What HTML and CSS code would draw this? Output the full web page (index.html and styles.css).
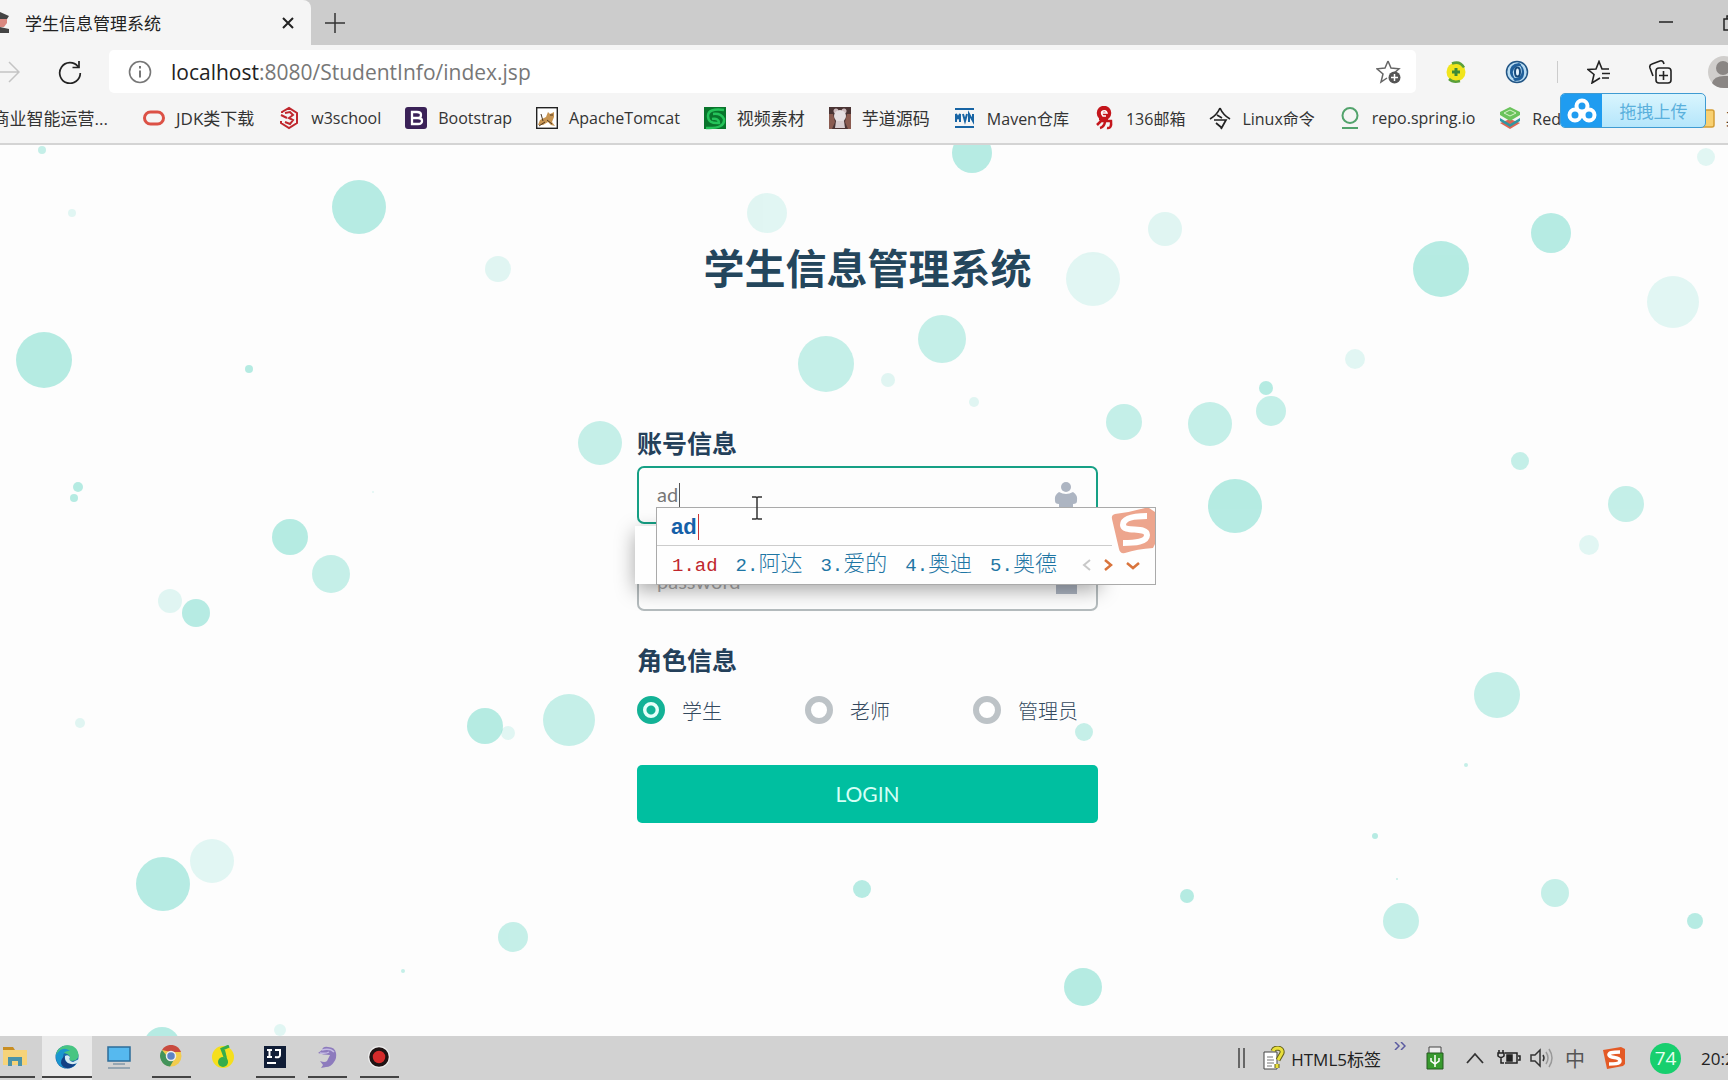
FILE: index.html
```html
<!DOCTYPE html>
<html lang="zh-CN">
<head>
  <meta charset="UTF-8" />
  <title>学生信息管理系统</title>
  <link rel="stylesheet" href="styles.css">
</head>
<body>
  <header class="browser">
    <div class="tabs">
      <div class="tab">
        <svg class="favicon" width="10" height="22" viewBox="0 0 10 22"><path d="M0 0l9 4-2 3H0z" fill="#444"/><path d="M0 7h7v4l-3 4H0z" fill="#d98880"/><path d="M0 15l9 2v4H0z" fill="#444"/></svg>
        <span class="tab-title">学生信息管理系统</span>
        <button class="icon-btn" aria-label="关闭"><svg width="14" height="14" viewBox="0 0 14 14" fill="none" stroke="#222" stroke-width="2"><path d="M2 2l10 10M12 2L2 12"/></svg></button>
      </div>
      <button class="icon-btn new-tab" aria-label="新标签"><svg width="20" height="20" viewBox="0 0 20 20" fill="none" stroke="#333" stroke-width="1.5"><path d="M10 0v20M0 10h20"/></svg></button>
      <div class="window-btns">
        <svg width="14" height="14" viewBox="0 0 14 14"><path d="M0 6h14" stroke="#222" stroke-width="1.5"/></svg>
        <svg width="5" height="16" viewBox="0 0 5 16" fill="none" stroke="#222" stroke-width="1.5"><path d="M6 4H1v11h5M4 4V1h2"/></svg>
      </div>
    </div>

    <div class="toolbar">
      <button class="icon-btn" aria-label="前进"><svg width="20" height="22" viewBox="0 0 20 22" fill="none" stroke="#c4c4c4" stroke-width="1.5"><path d="M0 11h18M9 1l10 10L9 21"/></svg></button>
      <button class="icon-btn reload" aria-label="刷新"><svg width="24" height="24" viewBox="0 0 24 24" fill="none" stroke="#222" stroke-width="1.7"><path d="M20 6.500A10.300 10.300 0 1 0 22.300 13M21 1v6.500h-6.500"/></svg></button>
      <div class="address">
        <svg width="24" height="24" viewBox="0 0 24 24" fill="none" stroke="#777" stroke-width="1.6"><circle cx="12" cy="12" r="10.500"/><path d="M12 10.500v7M12 6v2.500" stroke-width="2"/></svg>
        <div class="url"><b>localhost</b>:8080/StudentInfo/index.jsp</div>
        <svg width="26" height="26" viewBox="0 0 26 26"><path d="M12 2l3 7 8 .8-6 5.200M12 2L9 9l-8 .8 6 5.200-2 8 6-4" fill="none" stroke="#666" stroke-width="1.500"/><circle cx="18.500" cy="18.500" r="6" fill="#555"/><path d="M18.500 15v7M15 18.500h7" stroke="#fff" stroke-width="1.500"/></svg>
      </div>
      <button class="tool"><svg width="22" height="22" viewBox="0 0 22 22"><circle cx="11" cy="11" r="9.500" fill="#f1e51c"/><path d="M7 2.500q8-3 12 4M15 20q-7 2-11-2" fill="none" stroke="#5aa03a" stroke-width="2.500"/><path d="M11 7v8M7 11h8" stroke="#3d8a37" stroke-width="3"/></svg></button>
      <button class="tool"><svg width="24" height="24" viewBox="0 0 24 24"><circle cx="12" cy="12" r="10.500" fill="#b9dcf2" stroke="#215585" stroke-width="1.500"/><path d="M14 3Q4 4 5 13q1 5 5 6-5-8 1-12 3-2 5 0 1-3-2-4zM10 21q10 0 9-10-1-5-4-6 4 8-1 12-3 2-6 0 0 3 2 4z" fill="#1f5f9b"/><ellipse cx="12.500" cy="12" rx="2.500" ry="4.500" fill="#e8f5ff" stroke="#174a7b" stroke-width="2"/></svg></button>
      <span class="divider"></span>
      <button class="tool"><svg width="24" height="24" viewBox="0 0 24 24" fill="none" stroke="#222" stroke-width="1.600"><path d="M22 9h-7l-3-7.500L9 9l-8 .500 6 5L5 23l8-5M15 13.500h8M15 18h7"/></svg></button>
      <button class="tool"><svg width="24" height="24" viewBox="0 0 24 24" fill="none" stroke="#222" stroke-width="1.600"><path d="M5 16L2 8q-1-3 2-4l8-3q3-1 4 3"/><rect x="8" y="8" width="15" height="15" rx="3"/><path d="M15.500 11v9M11 15.500h9"/></svg></button>
      <svg class="avatar" width="20" height="32" viewBox="0 0 20 32"><circle cx="16" cy="16" r="16" fill="#d0cecc"/><circle cx="15" cy="12" r="7" fill="#8a8684"/><path d="M4 27q2-7 12-7h4v12h-4q-8 0-12-5z" fill="#8a8684"/></svg>
    </div>

    <nav class="bookmarks">
      <a href="#" class="cut zh">商业智能运营...</a>
      <a href="#"><svg width="22" height="24" viewBox="0 0 22 24"><rect x="1.500" y="6" width="19" height="12" rx="6" fill="none" stroke="#dc5146" stroke-width="3"/></svg><span class="zh">JDK类下载</span></a>
      <a href="#"><svg width="22" height="24" viewBox="0 0 22 24" fill="none" stroke="#c0272d" stroke-width="2"><path d="M4 7V6l7-4 8 5v10l-8 5-8-5v-2M3 9l6 3M7 7l5-1 3 3-4 3 4 2-3 4-5-2"/></svg>w3school</a>
      <a href="#"><svg width="22" height="24" viewBox="0 0 22 24"><rect y="1" width="22" height="22" rx="3" fill="#3a2157"/><path d="M7 6h5q4 0 4 3t-3 3q4 0 4 3t-4 3H7zM7 12h6" fill="none" stroke="#fff" stroke-width="2.300"/></svg>Bootstrap</a>
      <a href="#"><svg width="22" height="24" viewBox="0 0 22 24"><rect x=".700" y="1.700" width="20.600" height="20.600" fill="#fff" stroke="#222" stroke-width="1.400"/><path d="M2 19l2-5 6-3 2-5 2 2 4-2v5l-2 5 3 4-4-1-3-3-5 3z" fill="#c89552"/><path d="M3 20l6-4M11 14l5 4M14 9h3M5 8l2 7" stroke="#4c3823"/></svg>ApacheTomcat</a>
      <a href="#" class="zh"><svg width="22" height="24" viewBox="0 0 22 24"><rect y="1" width="22" height="22" fill="#09752c"/><path d="M20 4Q4 2 4 10t11 7q0-5-7-4M2 22q19 1 18-9-3-6-11-5" fill="none" stroke="#25c35a" stroke-width="2.500"/></svg>视频素材</a>
      <a href="#" class="zh"><svg width="22" height="24" viewBox="0 0 22 24"><rect y="1" width="22" height="22" fill="#4b3434"/><path d="M0 8h4l2 8-3 7H0zM22 8h-4l-2 8 3 7h3z" fill="#8a5b50"/><circle cx="7" cy="5" r="2.500" fill="#cbb9bb"/><circle cx="15" cy="5" r="2.500" fill="#cbb9bb"/><circle cx="11" cy="10" r="6" fill="#e5dfe1"/><path d="M7 15h8l1 7H6z" fill="#d8cdd0"/></svg>芋道源码</a>
      <a href="#"><svg width="22" height="24" viewBox="0 0 22 24" fill="none" stroke="#1764a4" stroke-width="2"><path d="M1 3h19M1 21h19"/><path d="M2 16V8l2 4 2-4v8M9 8l2 7 2-7M15 16V8l4 7V8"/></svg>Maven仓库</a>
      <a href="#"><svg width="22" height="24" viewBox="0 0 22 24" fill="none" stroke="#c4161c" stroke-width="2.500"><circle cx="11" cy="7" r="6" fill="#c4161c"/><path d="M8 7h6q-1-3-4-2t0 5h3" stroke="#fff" stroke-width="1.500"/><path d="M6 13h9M4 19l4-4h10q1 8-4 7M12 16q-1 5-5 6"/></svg>136邮箱</a>
      <a href="#"><svg width="22" height="24" viewBox="0 0 22 24" fill="none" stroke="#222" stroke-width="1.700"><path d="M11 2Q8 9 1 13M11 2q3 7 10 11M8 9l5 3M5 14h12l-5 9M7 17l6 5"/></svg>Linux命令</a>
      <a href="#"><svg width="22" height="24" viewBox="0 0 22 24" fill="none" stroke="#52a36c" stroke-width="2"><circle cx="11" cy="9.500" r="7.500"/><path d="M3 22h16"/></svg>repo.spring.io</a>
      <a href="#"><svg width="22" height="24" viewBox="0 0 22 24"><path d="M1 17l10 6 10-6-10-4z" fill="#df6553"/><path d="M1 12l10 6 10-6v3l-10 6-10-6z" fill="#3196a2"/><path d="M1 6l10-5 10 5v3l-10 6L1 9z" fill="#6ac35c"/><path d="M5 7l6-3 6 3-6 3z" fill="none" stroke="#d8f1c8"/></svg>Redis命令参考手册</a>
      <a href="#" class="zh"><svg width="22" height="24" viewBox="0 0 22 24"><rect x="1" y="4" width="20" height="17" rx="2" fill="#f8d071" stroke="#d39d35" stroke-width="1.500"/></svg>其他</a>
    </nav>
    <button class="upload">
      <span class="upload-logo"><svg width="30" height="26" viewBox="0 0 30 26" fill="none" stroke="#fff" stroke-width="4"><circle cx="15" cy="8" r="5.500"/><circle cx="8" cy="17" r="5.500"/><circle cx="22" cy="17" r="5.500"/></svg></span>
      <span class="upload-text">拖拽上传</span>
    </button>
  </header>

  <main class="page">
    <svg class="bubbles" viewBox="0 0 1728 892" preserveAspectRatio="xMidYMin slice" fill="#00bfa0">
      <g opacity=".28">
        <circle cx="359" cy="62" r="27"/><circle cx="972" cy="8" r="20"/><circle cx="1551" cy="88" r="20"/><circle cx="1441" cy="124" r="28"/><circle cx="44" cy="215" r="28"/><circle cx="249" cy="224" r="4"/><circle cx="1266" cy="243" r="7"/><circle cx="1235" cy="361" r="27"/><circle cx="78" cy="342" r="5"/><circle cx="74" cy="353" r="4"/><circle cx="290" cy="392" r="18"/><circle cx="196" cy="468" r="14"/><circle cx="485" cy="581" r="18"/><circle cx="163" cy="739" r="27"/><circle cx="862" cy="744" r="9"/><circle cx="1187" cy="751" r="7"/><circle cx="1083" cy="842" r="19"/><circle cx="1695" cy="776" r="8"/><circle cx="162" cy="900" r="18"/><circle cx="1375" cy="691" r="3"/>
      </g>
      <g opacity=".22">
        <circle cx="42" cy="5" r="4"/><circle cx="826" cy="219" r="28"/><circle cx="942" cy="194" r="24"/><circle cx="1271" cy="266" r="15"/><circle cx="1124" cy="277" r="18"/><circle cx="1210" cy="279" r="22"/><circle cx="600" cy="298" r="22"/><circle cx="1520" cy="316" r="9"/><circle cx="1626" cy="359" r="18"/><circle cx="331" cy="429" r="19"/><circle cx="569" cy="575" r="26"/><circle cx="1084" cy="587" r="9"/><circle cx="1497" cy="550" r="23"/><circle cx="1466" cy="620" r="2"/><circle cx="513" cy="792" r="15"/><circle cx="403" cy="826" r="2"/><circle cx="1401" cy="776" r="18"/><circle cx="1555" cy="748" r="14"/><circle cx="1397" cy="734" r="1"/>
      </g>
      <g opacity=".11">
        <circle cx="72" cy="68" r="4"/><circle cx="498" cy="124" r="13"/><circle cx="767" cy="68" r="20"/><circle cx="1165" cy="84" r="17"/><circle cx="1093" cy="134" r="27"/><circle cx="1706" cy="12" r="9"/><circle cx="1673" cy="157" r="26"/><circle cx="888" cy="235" r="7"/><circle cx="974" cy="257" r="5"/><circle cx="1355" cy="214" r="10"/><circle cx="1589" cy="400" r="10"/><circle cx="170" cy="456" r="12"/><circle cx="80" cy="578" r="5"/><circle cx="508" cy="588" r="7"/><circle cx="212" cy="716" r="22"/><circle cx="280" cy="885" r="6"/><circle cx="373" cy="347" r="1"/>
      </g>
    </svg>

    <form class="login">
      <h1>学生信息管理系统</h1>
      <label class="caption" for="user">账号信息</label>
      <div class="field active">
        <input type="text" id="user" value="ad" autocomplete="off">
        <span class="caret"></span>
        <svg class="field-icon" width="24" height="28" viewBox="0 0 24 28" fill="#adb5c2"><circle cx="12" cy="6" r="5"/><path d="M5 11q7 4 14 0 5 3 4 9 0 3-4 3v3q-7 2-14 0v-3q-4 0-4-3-1-6 4-9z"/></svg>
        <div class="suggest"></div>
        <div class="ime">
          <div class="ime-input">ad<span class="ime-caret"></span></div>
          <div class="ime-list">
            <span class="first">1.ad</span>
            <span>2.<i>阿达</i></span>
            <span>3.<i>爱的</i></span>
            <span>4.<i>奥迪</i></span>
            <span>5.<i>奥德</i></span>
            <svg class="ime-arrows" width="60" height="16" viewBox="0 0 60 16" fill="none" stroke="#d9743c" stroke-width="2.500"><path d="M9 3L3 8l6 5" stroke="#c8c8c8" stroke-width="2"/><path d="M24 3l6 5-6 5M46 6l6 5 6-5"/></svg>
          </div>
          <svg class="ime-logo" width="44" height="46" viewBox="0 0 44 46"><path d="M4 6Q20 4 34 0h4l6 4v32l-2 4Q26 41 14 45q-5 1-6-4L1 11q-1-4 3-5z" fill="#eda58d"/><path d="M36 8Q12 8 12 17c0 8 24 1 24 10 0 7-12 8-24 8" fill="none" stroke="#fff" stroke-width="6"/></svg>
        </div>
        <svg class="pointer" width="10" height="24" viewBox="0 0 10 24" fill="none" stroke="#333" stroke-width="1.500"><path d="M0 1h4l1 1 1-1h4M5 2v20M0 23h4l1-1 1 1h4"/></svg>
      </div>
      <div class="field">
        <input type="password" id="pwd" placeholder="password" aria-label="password">
        <svg class="field-icon" width="24" height="28" viewBox="0 0 24 28" fill="#adb5c2"><path d="M2 12h21v14H2z"/><path d="M7 12V7q5-9 10 0v5" fill="none" stroke="#adb5c2" stroke-width="3"/></svg>
      </div>

      <div class="caption roles-caption">角色信息</div>
      <div class="roles">
        <label><input type="radio" name="role" checked>学生</label>
        <label><input type="radio" name="role">老师</label>
        <label><input type="radio" name="role">管理员</label>
      </div>
      <button type="button" class="submit">LOGIN</button>
    </form>
  </main>

  <footer class="taskbar">
    <div class="apps">
      <button class="app running"><svg width="24" height="24" viewBox="0 0 24 24"><path d="M0 2h10l2 3H0z" fill="#c98e22"/><path d="M0 5h24v15H0z" fill="#f6d37a"/><path d="M5 21v-9h14v9h-4v-5H9v5z" fill="#4b93a8"/></svg></button>
      <button class="app current"><svg width="24" height="24" viewBox="0 0 24 24"><circle cx="12" cy="12" r="11.500" fill="#1868ad"/><path d="M1 10C3-3 23-3 23.500 10c0 6-7 7-9 5 3-6-6-9-13-5z" fill="#47c582"/><path d="M1 10Q7 0 15 6q-7-1-7 6c0 8 8 10 14 6-5 8-22 7-21-8z" fill="#1996cf"/><path d="M10 11c-2 7 5 9 12 6-5 9-15 7-16 1 0-4 2-6 4-7z" fill="#123f84"/><path d="M10 11q3-2 5 1-2 4 3 5l6-3-1 4c-7 3-14 0-13-7z" fill="#d4eaf2"/></svg></button>
      <button class="app"><svg width="24" height="24" viewBox="0 0 24 24"><rect x="1" y="2" width="22" height="14" fill="#56b9ef" stroke="#2d6c99" stroke-width="1.500"/><path d="M6 19h12M1 23h22" stroke="#8298a8" stroke-width="1.500"/></svg></button>
      <button class="app running"><svg width="22" height="22" viewBox="0 0 22 22"><circle cx="11" cy="11" r="10.500" fill="#f2cc4e"/><path d="M2 5a10.500 10.500 0 0 1 18 0l1 2H11z" fill="#c94b3f"/><path d="M2 5a10.500 10.500 0 0 0 8 16.500l4-7-6-2z" fill="#43935a"/><circle cx="11" cy="11" r="4.500" fill="#5c83c6" stroke="#eee" stroke-width="1.500"/></svg></button>
      <button class="app"><svg width="24" height="24" viewBox="0 0 24 24"><circle cx="12" cy="12" r="11" fill="#f5df1d"/><path d="M18 1l-7 3 3 8" fill="none" stroke="#35ad4c" stroke-width="3"/><path d="M13 5l3 13" stroke="#35ad4c" stroke-width="2"/><circle cx="12" cy="17" r="5" fill="#35ad4c"/></svg></button>
      <button class="app running"><svg width="24" height="24" viewBox="0 0 24 24"><path d="M1 1h22v22H1z" fill="#101d36"/><path d="M4 5h5M6.500 5v7M4 12h5M12 5h5v5q0 3-5 2M4 18h9" fill="none" stroke="#fff" stroke-width="2"/></svg></button>
      <button class="app running"><svg width="24" height="24" viewBox="0 0 24 24"><path d="M3 8l4-3q1-4 6-3 7 0 8 6 1 5-2 9-3 5-8 5l-5 1 2-3-3-4q5 2 7 0l3-6Q8 10 3 8z" fill="#8d7bbd"/><path d="M7 5q8-2 12 2M5 8q6 1 9-1" fill="none" stroke="#c5bce4" stroke-width="1.500"/></svg></button>
      <button class="app running"><svg width="24" height="24" viewBox="0 0 24 24"><circle cx="12" cy="12" r="11" fill="#eee"/><circle cx="12" cy="12" r="8" fill="#d52b2b" stroke="#201414" stroke-width="3.500"/></svg></button>
    </div>
    <div class="tray">
      <svg width="8" height="20" viewBox="0 0 8 20"><path d="M1 0v20M6 0v20" stroke="#444" stroke-width="1.500"/></svg>
      <a href="#" class="tray-link"><svg width="24" height="24" viewBox="0 0 24 24"><path d="M2 6h13v17H2z" fill="#fff" stroke="#444"/><path d="M5 11h6M5 14h7M5 17h7M5 20h5" stroke="#777"/><path d="M11 5q1-3 5-3 5 1 4 5l-4 7M15 18v4" fill="none" stroke="#625f18" stroke-width="5"/><path d="M11 5q1-3 5-3 5 1 4 5l-4 7M15 18v4" fill="none" stroke="#e9df3c" stroke-width="3"/></svg>HTML5标签</a>
      <svg class="more" width="12" height="8" viewBox="0 0 12 8" fill="none" stroke="#5b5ba0" stroke-width="1.500"><path d="M1 0l4 4-4 4M7 0l4 4-4 4"/></svg>
      <svg class="usb" width="18" height="24" viewBox="0 0 18 24"><path d="M3 1h12v7H3z" fill="#eee" stroke="#444"/><path d="M1 7h16v16H1z" fill="#389a2e" stroke="#245b20"/><path d="M9 21V9M5 12v3l4 3 4-3v-3" fill="none" stroke="#fff" stroke-width="1.500"/></svg>
      <svg class="up" width="18" height="12" viewBox="0 0 18 12" fill="none" stroke="#333" stroke-width="1.800"><path d="M1 11l8-9 8 9"/></svg>
      <svg class="power" width="24" height="16" viewBox="0 0 24 16" fill="none" stroke="#222" stroke-width="1.500"><path d="M2 0v3M6 0v3M1 3h6v3q-3 3-6 0zM4 8v5h3M8 3h12v10H8M21 6h2v4h-2"/><path d="M10 5h5v6h-5z" fill="#222"/></svg>
      <svg class="sound" width="24" height="20" viewBox="0 0 24 20" fill="none" stroke="#333" stroke-width="1.500"><path d="M1 7h4l5-5v16l-5-5H1zM13 7q2 3 0 6"/><path d="M16 4q4 6 0 12M19 1q6 9 0 18" stroke="#999"/></svg>
      <span class="lang">中</span>
      <svg class="sogou" width="24" height="24" viewBox="0 0 24 24"><path d="M1 4l18-3 4 2v15l-2 2-16 3z" fill="#e45a26"/><path d="M18 6Q6 6 7 9c1 4 11 1 11 6 0 3-6 3-11 3" fill="none" stroke="#fff" stroke-width="3.500"/></svg>
      <span class="score">74</span>
      <span class="clock">20:20</span>
    </div>
  </footer>
</body>
</html>
```
FILE: styles.css
```css
* {
  box-sizing: border-box;
}

body {
  margin: 0;
  min-height: 100vh;
  display: flex;
  flex-direction: column;
  overflow: hidden;
  background: #fdfdfd;
  color: #34495e;
  font-family: Lato, "Noto Sans CJK SC", sans-serif;
}

button {
  border: none;
  padding: 0;
  background: none;
  font-family: inherit;
}

svg {
  display: block;
  flex: none;
}

/* browser window */
.browser {
  position: relative;
  height: 145px;
  background: #f5f5f5;
  border-bottom: 2px solid #d4d4d4;
  color: #333;
  font-family: "Open Sans", "Noto Sans CJK SC", sans-serif;
}

.tabs {
  display: flex;
  align-items: center;
  height: 45px;
  background: #ccc;
}

.tab {
  display: flex;
  align-items: center;
  align-self: stretch;
  width: 311px;
  padding-right: 16px;
  border-radius: 0 8px 0 0;
  background: #f5f5f5;
}

.tab-title {
  flex: 1;
  margin-left: 15px;
  font-size: 17px;
  color: #222;
}

.new-tab {
  margin-left: 14px;
}

.window-btns {
  display: flex;
  align-items: center;
  gap: 50px;
  margin-left: auto;
}

.toolbar {
  display: flex;
  align-items: center;
  height: 53px;
}

.reload {
  margin: 0 27px 0 38px;
}

.address {
  flex: 1;
  display: flex;
  align-items: center;
  height: 43px;
  margin-right: 9px;
  padding: 0 14px 0 19px;
  border-radius: 5px;
  background: #fff;
}

.url {
  flex: 1;
  margin-left: 19px;
  font-size: 21px;
  color: #777;
}

.url b {
  font-weight: 400;
  color: #222;
}

.tool {
  display: flex;
  justify-content: center;
  width: 61px;
}

.divider {
  width: 1px;
  height: 22px;
  margin: 0 10px;
  background: #ccc;
}

.avatar {
  margin-left: 18px;
}

.bookmarks {
  display: flex;
  align-items: center;
  gap: 24px;
  height: 39px;
  overflow: hidden;
}

.bookmarks a {
  display: flex;
  align-items: center;
  flex: none;
  gap: 11px;
  font-size: 16px;
  color: #333;
  text-decoration: none;
  white-space: nowrap;
}

.bookmarks .zh {
  font-size: 17px;
}

.bookmarks .cut {
  justify-content: flex-end;
  width: 119px;
  padding-right: 11px;
}

.upload {
  position: absolute;
  top: 93px;
  right: 22px;
  display: flex;
  width: 146px;
  height: 35px;
  border: 1px solid #3f9bd2;
  border-radius: 5px;
  background: linear-gradient(#d9f5fe, #b5e6fb);
  overflow: hidden;
}

.upload-logo {
  display: flex;
  align-items: center;
  justify-content: center;
  width: 41px;
  height: 100%;
  background: #1f9cf0;
}

.upload-text {
  flex: 1;
  align-self: center;
  font-size: 17px;
  color: #5ab0dc;
}

/* login page */
.page {
  position: relative;
  flex: 1;
  padding: 100px 0 0 7px;
}

.bubbles {
  position: absolute;
  top: 0;
  left: 0;
  width: 100%;
  height: 100%;
}

.login {
  position: relative;
  width: 461px;
  margin: 0 auto;
}

h1 {
  margin: 0 0 135px;
  font-size: 41px;
  line-height: 48px;
  text-align: center;
  color: #24465c;
}

.caption {
  display: block;
  margin-bottom: 8px;
  font-size: 25px;
  font-weight: 700;
  line-height: 30px;
  color: #24405a;
}

.field {
  position: relative;
  margin-bottom: 29px;
}

.field input {
  display: block;
  width: 100%;
  height: 58px;
  padding: 0 60px 3px 18px;
  border: 2px solid #b4bbbd;
  border-radius: 7px;
  outline: none;
  background: #fdfdfd;
  font-family: inherit;
  font-size: 20px;
  color: #777;
}

.field input::placeholder {
  color: #aaa;
}

.field.active {
  z-index: 1;
}

.field.active input {
  border-color: #16a085;
}

.field-icon {
  position: absolute;
  top: 15px;
  right: 20px;
}

.caret {
  position: absolute;
  top: 17px;
  left: 42px;
  width: 1px;
  height: 24px;
  background: #555;
}

.suggest {
  position: absolute;
  top: 60px;
  left: -2px;
  right: -2px;
  height: 58px;
  background: #fefefe;
  box-shadow: 0 6px 20px rgba(0, 0, 0, 0.35);
}

.ime {
  position: absolute;
  top: 41px;
  left: 19px;
  width: 500px;
  height: 78px;
  border: 1px solid #aaa;
  background: #fefefe;
}

.ime-input {
  display: flex;
  align-items: center;
  width: 455px;
  height: 38px;
  padding-left: 14px;
  border-bottom: 1px solid #ccc;
  font-family: "Liberation Sans", sans-serif;
  font-size: 22px;
  font-weight: 700;
  color: #1560a8;
}

.ime-caret {
  width: 1px;
  height: 26px;
  margin-left: 1px;
  background: #c33;
}

.ime-list {
  display: flex;
  align-items: baseline;
  gap: 18px;
  height: 38px;
  padding-left: 15px;
  font-family: "Liberation Mono", "Noto Sans CJK SC", monospace;
  font-size: 19px;
  line-height: 40px;
  color: #1f76a4;
  white-space: nowrap;
}

.ime-list i {
  font-size: 22px;
  font-style: normal;
  font-weight: 300;
}

.ime-list .first {
  color: #c0272d;
}

.ime-arrows {
  align-self: center;
  margin-left: 6px;
}

.ime-logo {
  position: absolute;
  top: 0;
  right: 0;
}

.pointer {
  position: absolute;
  top: 30px;
  left: 115px;
}

.roles-caption {
  margin: 34px 0 21px;
}

.roles {
  display: flex;
  margin-bottom: 41px;
}

.roles label {
  display: flex;
  align-items: center;
  width: 168px;
  height: 28px;
  font-size: 20px;
  font-weight: 300;
  white-space: nowrap;
}

.roles label:last-child {
  width: auto;
}

.roles input {
  appearance: none;
  width: 28px;
  height: 28px;
  margin: 0 17px 0 0;
  border: 6px solid #bdc3c7;
  border-radius: 50%;
  background: #fff;
}

.roles input:checked {
  border-color: #13b296;
  background: radial-gradient(circle, #13b296 4px, #e6fffa 5px);
}

.submit {
  display: block;
  width: 100%;
  height: 58px;
  padding-bottom: 2px;
  border-radius: 5px;
  background: #00bfa0;
  color: #d5fff6;
  font-size: 21px;
}

/* taskbar */
.taskbar {
  position: relative;
  display: flex;
  justify-content: space-between;
  height: 44px;
  background: #d2d2d2;
  color: #222;
  font-family: "Open Sans", "Noto Sans CJK SC", sans-serif;
  overflow: hidden;
}

.apps {
  display: flex;
  gap: 2px;
  margin-left: -10px;
}

.app {
  display: flex;
  flex-direction: column;
  align-items: center;
  justify-content: space-between;
  width: 50px;
  padding: 9px 0 2px;
}

.running::after,
.current::after {
  content: "";
  width: 39px;
  height: 2px;
  background: #444;
}

.current {
  background: #eaeaea;
}

.current::after {
  width: 50px;
}

.tray {
  display: flex;
  align-items: center;
}

.tray-link {
  display: flex;
  align-items: center;
  gap: 5px;
  margin-left: 16px;
  font-size: 17px;
  color: #222;
  text-decoration: none;
}

.more {
  align-self: flex-start;
  margin: 6px 0 0 13px;
}

.usb {
  margin-left: 20px;
}

.up {
  margin: 0 13px 0 22px;
}

.power,
.sound {
  margin-right: 9px;
}

.lang {
  margin-left: 2px;
  font-size: 20px;
  color: #555;
}

.sogou {
  margin-left: 17px;
}

.score {
  width: 31px;
  height: 31px;
  margin: 0 20px 0 24px;
  border-radius: 50%;
  background: #17cf6e;
  color: #e6fff0;
  font-size: 19px;
  line-height: 31px;
  text-align: center;
}

.clock {
  width: 27px;
  overflow: hidden;
  font-size: 17px;
}
```
